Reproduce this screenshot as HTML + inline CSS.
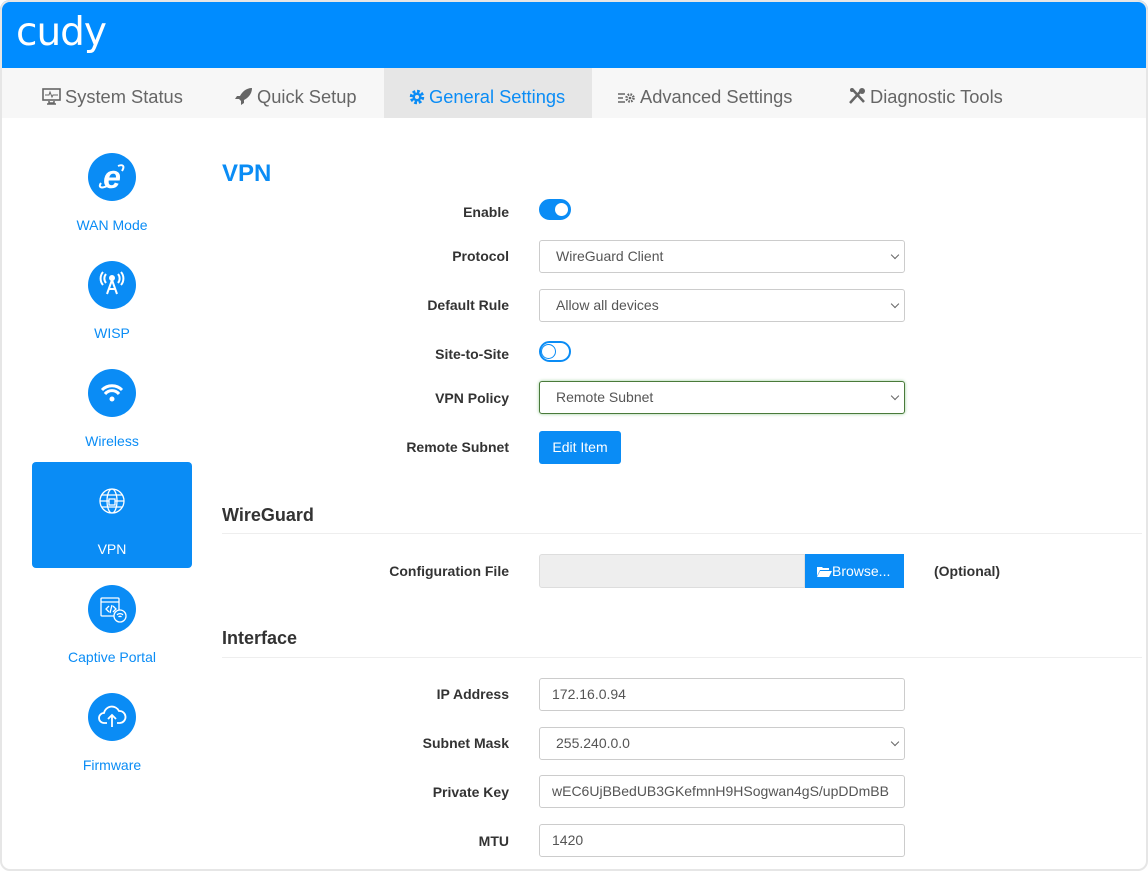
<!DOCTYPE html>
<html><head><meta charset="utf-8"><style>
*{box-sizing:border-box;margin:0;padding:0}
body{width:1148px;height:871px;background:#fff;font-family:"Liberation Sans",Arial,sans-serif;position:relative;overflow:hidden}
.frame{position:absolute;left:0;top:0;width:1148px;height:871px;border-radius:10px;overflow:hidden;background:#fff}
.bd{position:absolute;left:0;top:0;width:1148px;height:871px;border:2px solid #e6e6e6;border-radius:10px;pointer-events:none}
.hdr{position:absolute;left:0;top:0;width:100%;height:68px;background:#008cff}
.logo{position:absolute;left:16px;top:10px;color:#fff;font-size:39px;font-family:"DejaVu Sans","Liberation Sans",sans-serif;font-weight:normal;letter-spacing:-1px}
.nav{position:absolute;left:0;top:68px;width:100%;height:50px;background:#f7f7f7}
.tab{position:absolute;top:0;height:50px;line-height:50px;padding-top:4px;font-size:18.3px;color:#666;white-space:nowrap}
.tab svg{vertical-align:-2px;margin-right:4px}
.act{background:#e6e6e6;color:#0a8cf5}
.side{position:absolute;left:32px;width:160px;text-align:center;color:#0a8cf5;font-size:14px}
.circ{position:absolute;left:56px;width:48px;height:48px;border-radius:50%;background:#0a8cf5}
.circ svg{position:absolute;left:0;top:0}
.lbl{position:absolute;width:160px;left:0;text-align:center}
.vpnbox{position:absolute;left:32px;top:462px;width:160px;height:106px;background:#0a8cf5;border-radius:4px}
h1{position:absolute;left:222px;top:160px;font-size:24px;color:#0a8cf5;font-weight:bold}
.fl{position:absolute;right:639px;font-size:14px;font-weight:bold;color:#333;text-align:right;white-space:nowrap}
.inp{position:absolute;left:539px;width:366px;height:33px;border:1px solid #ccc;border-radius:3px;font-size:14px;color:#555;line-height:31px;padding-left:16px;background:#fff}
.sel::after{content:"";position:absolute;right:6px;top:11px;width:5px;height:5px;border-right:1px solid #666;border-bottom:1px solid #666;transform:rotate(45deg)}
.tog{position:absolute;left:539px;width:32px;height:21px;border-radius:11px;border:2px solid #0a8cf5}
.tog i{position:absolute;top:1px;width:15px;height:15px;border-radius:50%;background:#fff;border:1px solid #0a8cf5}
h2{position:absolute;left:222px;font-size:18px;font-weight:bold;color:#333}
.hr{position:absolute;left:222px;width:920px;height:1px;background:#eee}
</style></head><body><div class="frame">
<div class="hdr"><div class="logo">cudy</div></div>
<div class="nav">
<div class="tab" style="left:42px"><svg width="19" height="17" viewBox="0 0 19 17"><rect x="1" y="1" width="17" height="11" fill="none" stroke="#666" stroke-width="1.6"/><path d="M3 7h4l1-3 2 5 1-2h5" fill="none" stroke="#666" stroke-width="1"/><path d="M7 13v2h5v-2M5 16h9" stroke="#666" stroke-width="1.5" fill="none"/></svg>System Status</div>
<div class="tab" style="left:235px"><svg width="18" height="18" viewBox="0 0 18 18"><path d="M17 1C11 1 7 5 5 9L2 9 0 12 4 12 6 14 6 18 9 16 9 13C13 11 17 7 17 1Z" fill="#666"/></svg>Quick Setup</div>
<div class="tab act" style="left:384px;width:208px;padding-left:25px"><svg width="16" height="16" viewBox="0 0 16 16"><circle cx="8" cy="8" r="5.5" fill="none" stroke="#0a8cf5" stroke-width="3.5" stroke-dasharray="2.6 1.7"/><circle cx="8" cy="8" r="4.5" fill="#0a8cf5"/><circle cx="8" cy="8" r="2" fill="#e6e6e6"/></svg>General Settings</div>
<div class="tab" style="left:618px"><svg width="18" height="14" viewBox="0 0 18 14"><path d="M0 3h7M0 7h5M0 11h7" stroke="#666" stroke-width="1.5"/><circle cx="12" cy="7" r="3.5" fill="none" stroke="#666" stroke-width="2.5" stroke-dasharray="1.6 1.2"/><circle cx="12" cy="7" r="1.3" fill="#666"/></svg>Advanced Settings</div>
<div class="tab" style="left:848px"><svg width="18" height="18" viewBox="0 0 18 18"><path d="M2 16L12 5M5 3L16 15" stroke="#666" stroke-width="2.5"/><circle cx="14" cy="4" r="3" fill="#666"/><circle cx="4" cy="3" r="2" fill="#666"/></svg>Diagnostic Tools</div>
</div>

<div class="vpnbox"></div>
<div class="side" style="top:0">
<div class="circ" style="top:153px"><svg width="48" height="48" viewBox="0 0 48 48"><text x="24" y="35" text-anchor="middle" font-size="32" font-weight="bold" font-style="italic" fill="#fff" font-family="Liberation Sans">e</text><path d="M13 30c-3 4 0 6 6 3" fill="none" stroke="#fff" stroke-width="2"/><path d="M30 13c5-2 7 0 4 5" fill="none" stroke="#fff" stroke-width="2"/></svg></div>
<div class="lbl" style="top:217px">WAN Mode</div>
<div class="circ" style="top:261px"><svg width="48" height="48" viewBox="0 0 48 48" fill="none" stroke="#fff" stroke-width="2"><circle cx="24" cy="17" r="2" fill="#fff"/><path d="M24 19L19 33M24 19L29 33M21 28h6M18 13a7 7 0 000 9M30 13a7 7 0 010 9M15 11a10 10 0 000 13M33 11a10 10 0 010 13"/></svg></div>
<div class="lbl" style="top:325px">WISP</div>
<div class="circ" style="top:369px"><svg width="48" height="48" viewBox="0 0 48 48" fill="none" stroke="#fff" stroke-width="3"><path d="M14 21a14 14 0 0120 0M17 25a9 9 0 0114 0"/><circle cx="24" cy="30" r="2.5" fill="#fff" stroke="none"/></svg></div>
<div class="lbl" style="top:433px">Wireless</div>
<div class="circ" style="top:477px;background:none"><svg width="48" height="48" viewBox="0 0 48 48" fill="none" stroke="#fff" stroke-width="1.3"><circle cx="24" cy="24" r="12"/><ellipse cx="24" cy="24" rx="5" ry="12"/><path d="M12 24h24M14 18h20M14 30h20"/><rect x="21" y="22" width="6" height="6" fill="#0a8cf5"/></svg></div>
<div class="lbl" style="top:541px;color:#fff">VPN</div>
<div class="circ" style="top:585px"><svg width="48" height="48" viewBox="0 0 48 48" fill="none" stroke="#fff" stroke-width="1.3"><rect x="13" y="13" width="18" height="18" rx="1"/><path d="M13 17h18M21 21l-3 3 3 3M25 21l3 3-3 3M24 20l-2 8"/><circle cx="32" cy="31" r="6" fill="#0a8cf5"/><path d="M29 30a4 4 0 016 0M30.5 32a2 2 0 013 0"/></svg></div>
<div class="lbl" style="top:649px">Captive Portal</div>
<div class="circ" style="top:693px"><svg width="48" height="48" viewBox="0 0 48 48" fill="none" stroke="#fff" stroke-width="1.8"><path d="M19 30h-3a5 5 0 010-10 8 8 0 0115-2 6 6 0 011 12h-3"/><path d="M24 34V22M20 26l4-4 4 4"/></svg></div>
<div class="lbl" style="top:757px">Firmware</div>
</div>

<h1>VPN</h1>
<div class="fl" style="top:204px">Enable</div>
<div class="tog" style="top:199px;background:#0a8cf5"><i style="left:13px"></i></div>
<div class="fl" style="top:248px">Protocol</div>
<div class="inp sel" style="top:240px">WireGuard Client</div>
<div class="fl" style="top:297px">Default Rule</div>
<div class="inp sel" style="top:289px">Allow all devices</div>
<div class="fl" style="top:346px">Site-to-Site</div>
<div class="tog" style="top:341px;background:#fff"><i style="left:0px"></i></div>
<div class="fl" style="top:390px">VPN Policy</div>
<div class="inp sel" style="top:381px;border-color:#4a7a3a;box-shadow:0 0 3px #9c9">Remote Subnet</div>
<div class="fl" style="top:439px">Remote Subnet</div>
<div style="position:absolute;left:539px;top:431px;width:82px;height:33px;background:#0a8cf5;border-radius:3px;color:#fff;font-size:14px;line-height:33px;text-align:center">Edit Item</div>

<h2 style="top:505px">WireGuard</h2>
<div class="hr" style="top:533px"></div>
<div class="fl" style="top:563px">Configuration File</div>
<div style="position:absolute;left:539px;top:554px;width:266px;height:34px;background:#eee;border:1px solid #ddd;border-radius:3px 0 0 3px"></div>
<div style="position:absolute;left:805px;top:554px;width:99px;height:34px;background:#0a8cf5;color:#fff;font-size:14px;line-height:34px;padding-left:12px"><svg width="15" height="11" viewBox="0 0 15 11" style="vertical-align:-1px"><path d="M0 1h5l1 1h6v2H3L0 10z M3 5h12l-3 6H0z" fill="#fff"/></svg>Browse...</div>
<div style="position:absolute;left:934px;top:563px;font-size:14px;font-weight:bold;color:#333">(Optional)</div>

<h2 style="top:628px">Interface</h2>
<div class="hr" style="top:657px"></div>
<div class="fl" style="top:686px">IP Address</div>
<div class="inp" style="top:678px;padding-left:12px">172.16.0.94</div>
<div class="fl" style="top:735px">Subnet Mask</div>
<div class="inp sel" style="top:727px;padding-left:16px">255.240.0.0</div>
<div class="fl" style="top:784px">Private Key</div>
<div class="inp" style="top:775px;padding-left:12px">wEC6UjBBedUB3GKefmnH9HSogwan4gS/upDDmBB</div>
<div class="fl" style="top:833px">MTU</div>
<div class="inp" style="top:824px;padding-left:12px">1420</div>
</div><div class="bd"></div></body></html>
